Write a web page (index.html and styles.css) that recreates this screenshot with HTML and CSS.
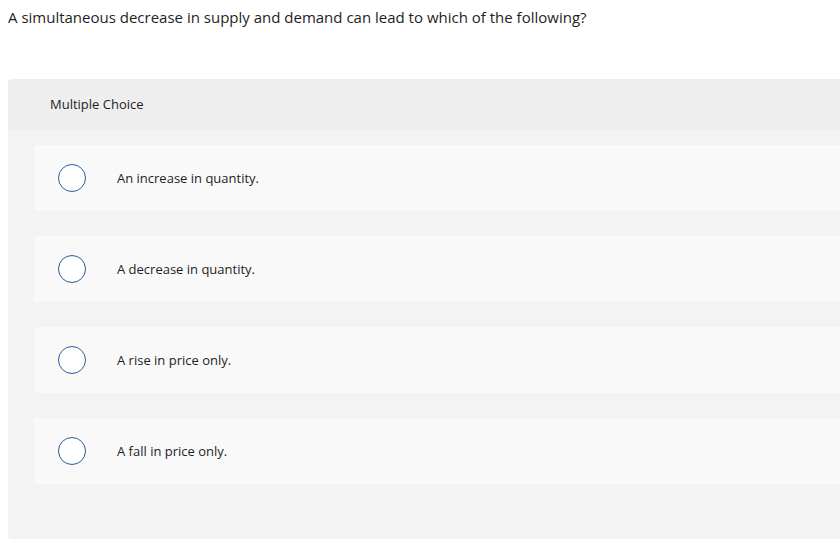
FILE: index.html
```html
<!DOCTYPE html>
<html lang="en">
<head>
<meta charset="utf-8">
<title>Multiple Choice</title>
<link rel="stylesheet" href="styles.css">
</head>
<body>
  <p class="question">A simultaneous decrease in supply and demand can lead to which of the following?</p>
  <section class="mc">
    <header class="mc-head">Multiple Choice</header>
    <div class="mc-body">
      <label class="choice"><span class="radio"></span><span class="choice-text">An increase in quantity.</span></label>
      <label class="choice"><span class="radio"></span><span class="choice-text">A decrease in quantity.</span></label>
      <label class="choice"><span class="radio"></span><span class="choice-text">A rise in price only.</span></label>
      <label class="choice"><span class="radio"></span><span class="choice-text">A fall in price only.</span></label>
    </div>
  </section>
</body>
</html>
```
FILE: styles.css
```css
html, body {
  margin: 0;
  padding: 0;
  background: #ffffff;
  overflow: hidden;
}
body {
  font-family: "Open Sans", "Liberation Sans", sans-serif;
  color: #222222;
  width: 840px;
}
.question {
  margin: 0;
  padding: 7px 0 0 8px;
  font-size: 15px;
  line-height: 20px;
  height: 79px;
  box-sizing: border-box;
  color: #1e1e1e;
}
.mc {
  margin-left: 8px;
  width: 850px;
  border-radius: 4px;
  overflow: hidden;
  background: #f3f3f3;
}
.mc-head {
  height: 50px;
  background: #eeeeee;
  display: flex;
  align-items: center;
  padding-left: 42px;
  font-size: 13px;
  color: #1e1e1e;
}
.mc-body {
  display: flex;
  flex-direction: column;
  gap: 25px;
  padding: 16px 0 55px 26px;
}
.choice {
  height: 66px;
  background: #f9f9f9;
  border-radius: 4px;
  display: flex;
  align-items: center;
  padding-left: 24px;
  gap: 31px;
}
.radio {
  width: 28px;
  height: 28px;
  box-sizing: border-box;
  border: 1.5px solid #2b5d96;
  border-radius: 50%;
  background: #ffffff;
  flex: none;
}
.choice-text {
  font-size: 13px;
  color: #1e1e1e;
}
```
